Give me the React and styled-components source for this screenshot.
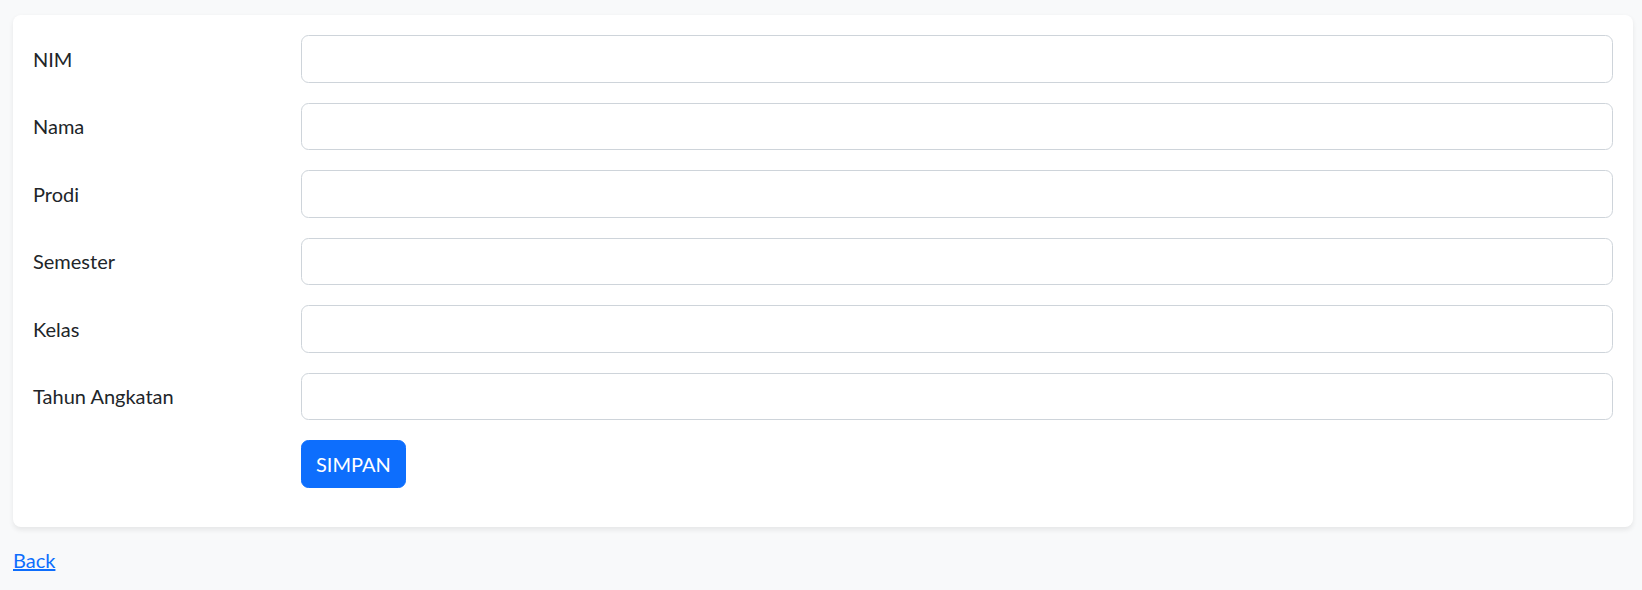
import React from 'react';
import styled, { createGlobalStyle } from 'styled-components';

const GlobalStyle = createGlobalStyle`
  body {
    margin: 0;
    background: #f8f9fa;
    font-family: "Segoe UI", Lato, "Noto Sans", "Liberation Sans", sans-serif;
    font-size: 20px;
    line-height: 1.5;
    color: #212529;
  }
`;

const Page = styled.div`
  padding: 15px 9px 0 13px;
`;

const Card = styled.div`
  background: #fff;
  border-radius: 8px;
  box-shadow: 0 2.5px 5px rgba(0, 0, 0, 0.075);
  padding: 20px 20px 19px;
`;

const Form = styled.form`
  display: flex;
  flex-direction: column;
`;

const Row = styled.div`
  display: grid;
  grid-template-columns: 238px 1fr;
  column-gap: 30px;
  align-items: center;
  margin-bottom: 20px;
`;

const Label = styled.label`
  font-size: 20px;
  line-height: 30px;
`;

const Input = styled.input`
  box-sizing: border-box;
  height: 47.5px;
  width: 100%;
  padding: 7.5px 15px;
  font: inherit;
  color: #212529;
  background: #fff;
  border: 1px solid #ced4da;
  border-radius: 7.5px;
  outline: none;
`;

const Button = styled.button`
  box-sizing: border-box;
  height: 47.5px;
  padding: 7.5px 14px;
  font: inherit;
  color: #fff;
  background: #0d6efd;
  border: 1px solid #0d6efd;
  border-radius: 7.5px;
  cursor: pointer;
`;

const BackLink = styled.a`
  display: inline-block;
  margin-top: 18px;
  color: #0d6efd;
  text-decoration: underline;
  font-size: 20px;
  line-height: 30px;
`;

const fields = ['NIM', 'Nama', 'Prodi', 'Semester', 'Kelas', 'Tahun Angkatan'];

export default function App() {
  return (
    <Page>
      <GlobalStyle />
      <Card>
        <Form onSubmit={(e) => e.preventDefault()}>
          {fields.map((f) => (
            <Row key={f}>
              <Label>{f}</Label>
              <Input type="text" />
            </Row>
          ))}
          <Row>
            <span />
            <div>
              <Button type="submit">SIMPAN</Button>
            </div>
          </Row>
        </Form>
      </Card>
      <BackLink href="#">Back</BackLink>
    </Page>
  );
}
